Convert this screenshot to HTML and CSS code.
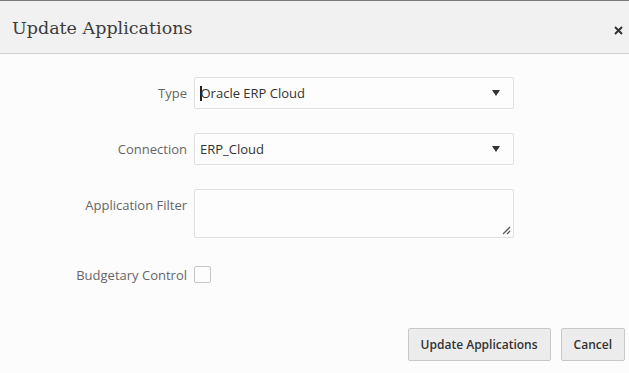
FILE: index.html
```html
<!DOCTYPE html>
<html>
<head>
<meta charset="utf-8">
<link rel="stylesheet" href="styles.css">
</head>
<body>
<div class="dialog">
  <div class="header">
    <h1 class="title">Update Applications</h1>
    <svg class="close" width="9" height="9" viewBox="0 0 9 9"><path d="M1 1 L8 8 M8 1 L1 8" stroke="#333" stroke-width="2" fill="none"/></svg>
  </div>
  <div class="content">
    <div class="form">
      <label class="label">Type</label>
      <div class="field select"><span class="caret"></span><span class="value">Oracle ERP Cloud</span><span class="arrow"></span></div>
      <label class="label">Connection</label>
      <div class="field select"><span class="value">ERP_Cloud</span><span class="arrow"></span></div>
      <label class="label">Application Filter</label>
      <div class="field textarea">
        <svg class="grip" width="9" height="9" viewBox="0 0 9 9"><path d="M1 8 L8 1 M5 8 L8 5" stroke="#555" stroke-width="1.3" fill="none"/></svg>
      </div>
      <label class="label check-label">Budgetary Control</label>
      <div class="check-cell"><span class="checkbox"></span></div>
    </div>
  </div>
  <div class="footer">
    <button class="btn">Update Applications</button>
    <button class="btn">Cancel</button>
  </div>
</div>
</body>
</html>
```
FILE: styles.css
```css
html, body {
  margin: 0;
  padding: 0;
  background: #fcfcfc;
}
.dialog {
  width: 629px;
  height: 373px;
  border-top: 1px solid #7a7a7a;
  box-sizing: border-box;
  display: flex;
  flex-direction: column;
  font-family: "Open Sans", "Noto Sans", sans-serif;
}
.header {
  height: 53px;
  background: #f1f1f1;
  border-bottom: 1px solid #d0d0d0;
  display: flex;
  align-items: center;
  justify-content: space-between;
  padding: 0 6px 0 12px;
  box-sizing: border-box;
}
.title {
  margin: 0;
  font-family: "DejaVu Serif", "Liberation Serif", serif;
  font-weight: normal;
  font-size: 17.5px;
  color: #3c3c3c;
  position: relative;
  top: 1px;
}
.close {
  margin-top: 6px;
}
.content {
  flex: 1;
  padding-top: 23px;
}
.form {
  display: grid;
  grid-template-columns: 187px 320px;
  column-gap: 7px;
  row-gap: 24px;
}
.label {
  text-align: right;
  font-size: 13px;
  color: #666;
  line-height: 32px;
}
.field {
  border: 1px solid #e0e0e0;
  border-radius: 2px;
  background: #fdfdfd;
  box-sizing: border-box;
}
.select {
  height: 32px;
  display: flex;
  align-items: center;
  padding-left: 5px;
  padding-right: 13px;
  font-size: 13px;
  color: #333;
}
.caret {
  width: 1.5px;
  height: 15px;
  background: #222;
  margin-right: -1px;
}
.value {
  flex: 1;
}
.arrow {
  width: 0;
  height: 0;
  border-left: 4.5px solid transparent;
  border-right: 4.5px solid transparent;
  border-top: 6px solid #333;
}
.textarea {
  height: 49px;
  display: flex;
  align-items: flex-end;
  justify-content: flex-end;
  padding: 0 2px 2px 0;
  margin-bottom: 4px;
}
.check-label {
  line-height: 18px;
}
.check-cell {
  display: flex;
  align-items: flex-start;
}
.checkbox {
  width: 17px;
  height: 17px;
  border: 1px solid #c6c6c6;
  border-radius: 2px;
  background: #fdfdfd;
  box-sizing: border-box;
}
.footer {
  display: flex;
  justify-content: flex-end;
  gap: 10px;
  padding: 0 4px 12px 0;
}
.btn {
  height: 33px;
  border: 1px solid #c8c8c8;
  border-radius: 2px;
  background: #ececec;
  font-family: "Open Sans", "Noto Sans", sans-serif;
  font-weight: 600;
  font-size: 12px;
  color: #333;
  padding: 0 12px;
}
.btn + .btn {
  padding: 0 12px;
}
```
